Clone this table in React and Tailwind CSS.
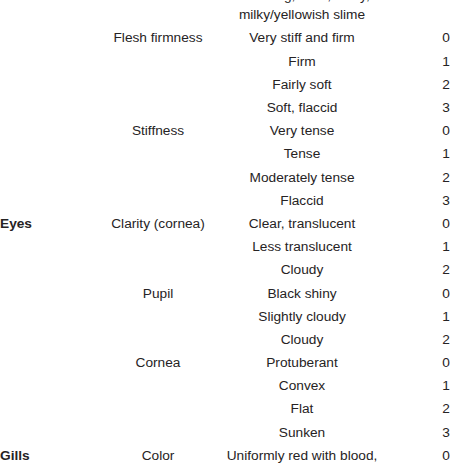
import React from "react";

const rows = [
  { c3: ["Yellowing, thick, clotty,", "milky/yellowish slime"], c4: "3" },
  { c2: "Flesh firmness", c3: ["Very stiff and firm"], c4: "0" },
  { c3: ["Firm"], c4: "1" },
  { c3: ["Fairly soft"], c4: "2" },
  { c3: ["Soft, flaccid"], c4: "3" },
  { c2: "Stiffness", c3: ["Very tense"], c4: "0" },
  { c3: ["Tense"], c4: "1" },
  { c3: ["Moderately tense"], c4: "2" },
  { c3: ["Flaccid"], c4: "3" },
  { c1: "Eyes", c2: "Clarity (cornea)", c3: ["Clear, translucent"], c4: "0" },
  { c3: ["Less translucent"], c4: "1" },
  { c3: ["Cloudy"], c4: "2" },
  { c2: "Pupil", c3: ["Black shiny"], c4: "0" },
  { c3: ["Slightly cloudy"], c4: "1" },
  { c3: ["Cloudy"], c4: "2" },
  { c2: "Cornea", c3: ["Protuberant"], c4: "0" },
  { c3: ["Convex"], c4: "1" },
  { c3: ["Flat"], c4: "2" },
  { c3: ["Sunken"], c4: "3" },
  { c1: "Gills", c2: "Color", c3: ["Uniformly red with blood,", "bright, no slime"], c4: "0", last: true },
];

export default function App() {
  return (
    <div className="w-[474px] h-[474px] overflow-hidden bg-white text-[#262324] text-[13.7px] leading-[19.5px] font-['Liberation_Sans',Arial,sans-serif]">
      <div className="mt-[-16.1px]">
        {rows.map((r, i) => (
          <div key={i} className="grid grid-cols-[100px_116px_172px_116px] py-[1.85px]">
            <div className="font-bold text-left">{r.c1 || ""}</div>
            <div className="text-center whitespace-nowrap">{r.c2 || ""}</div>
            <div className="text-center whitespace-nowrap flex flex-col">
              {r.c3.map((t, j) => (
                <span key={j} className={r.last && j === 1 ? "mt-[4px]" : ""}>{t}</span>
              ))}
            </div>
            <div className="text-center">{r.c4}</div>
          </div>
        ))}
      </div>
    </div>
  );
}
